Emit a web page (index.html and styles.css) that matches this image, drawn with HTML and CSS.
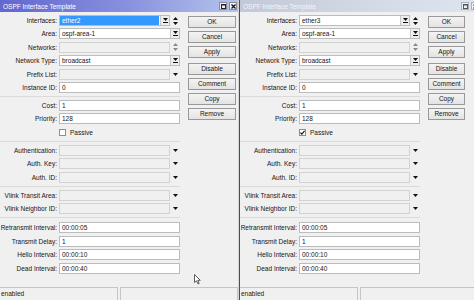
FILE: index.html
```html
<!DOCTYPE html>
<html lang="en">
<head>
    <meta charset="UTF-8">
    <title>OSPF Interface Template</title>
    <link rel="stylesheet" href="styles.css">
</head>
<body>
<div class="desk">

    <!-- left window (active) -->
    <div class="win active">
        <div class="titlebar">
            <span>OSPF Interface Template</span>
            <div class="tbtns">
                <span class="tbtn"><svg width="5" height="5" viewBox="0 0 5 5"><rect x="0.5" y="0.5" width="4" height="4" fill="none" stroke="#222"/><line x1="0" y1="1" x2="5" y2="1" stroke="#222"/></svg></span>
                <span class="tbtn"><svg width="5" height="5" viewBox="0 0 5 5"><path d="M0.5 0.5 L4.5 4.5 M4.5 0.5 L0.5 4.5" stroke="#111" stroke-width="1.3"/></svg></span>
            </div>
        </div>
        <div class="body">
            <div class="form">
                <div class="section">
                    <div class="row"><span class="lbl">Interfaces:</span><div class="ctl"><div class="field sel"><span class="val">ether2</span><span class="dd"><svg width="5" height="5" viewBox="0 0 5 5"><path d="M0 0 H5 L2.5 3 Z" fill="#111"/><rect x="0" y="4" width="5" height="1" fill="#111"/></svg></span></div><span class="icon"><svg width="5" height="8" viewBox="0 0 5 8"><path d="M2.5 0 L5 3 H0 Z M0 5 H5 L2.5 8 Z" fill="#111"/></svg></span></div></div>
                    <div class="row"><span class="lbl">Area:</span><div class="ctl"><div class="field"><span class="val">ospf-area-1</span><span class="dd"><svg width="5" height="5" viewBox="0 0 5 5"><path d="M0 0 H5 L2.5 3 Z" fill="#111"/><rect x="0" y="4" width="5" height="1" fill="#111"/></svg></span></div></div></div>
                    <div class="row"><span class="lbl">Networks:</span><div class="ctl"><div class="field off"></div><span class="icon"><svg width="5" height="8" viewBox="0 0 5 8"><path d="M2.5 0 L5 3 H0 Z M0 5 H5 L2.5 8 Z" fill="#8a8a8a"/></svg></span></div></div>
                    <div class="row"><span class="lbl">Network Type:</span><div class="ctl"><div class="field"><span class="val">broadcast</span><span class="dd"><svg width="5" height="5" viewBox="0 0 5 5"><path d="M0 0 H5 L2.5 3 Z" fill="#111"/><rect x="0" y="4" width="5" height="1" fill="#111"/></svg></span></div></div></div>
                    <div class="row"><span class="lbl">Prefix List:</span><div class="ctl"><div class="field off"></div><span class="icon"><svg width="5" height="3" viewBox="0 0 5 3"><path d="M0 0 H5 L2.5 3 Z" fill="#111"/></svg></span></div></div>
                    <div class="row"><span class="lbl">Instance ID:</span><div class="ctl"><div class="field"><span class="val">0</span></div></div></div>
                </div>
                <div class="sep"></div>
                <div class="section">
                    <div class="row"><span class="lbl">Cost:</span><div class="ctl"><div class="field"><span class="val">1</span></div></div></div>
                    <div class="row"><span class="lbl">Priority:</span><div class="ctl"><div class="field"><span class="val">128</span></div></div></div>
                    <div class="row"><span class="lbl"></span><div class="ctl"><span class="check"></span><span class="chklbl">Passive</span></div></div>
                </div>
                <div class="sep"></div>
                <div class="section">
                    <div class="row"><span class="lbl">Authentication:</span><div class="ctl"><div class="field off"></div><span class="icon"><svg width="5" height="3" viewBox="0 0 5 3"><path d="M0 0 H5 L2.5 3 Z" fill="#111"/></svg></span></div></div>
                    <div class="row"><span class="lbl">Auth. Key:</span><div class="ctl"><div class="field off"></div><span class="icon"><svg width="5" height="3" viewBox="0 0 5 3"><path d="M0 0 H5 L2.5 3 Z" fill="#111"/></svg></span></div></div>
                    <div class="row"><span class="lbl">Auth. ID:</span><div class="ctl"><div class="field off"></div><span class="icon"><svg width="5" height="3" viewBox="0 0 5 3"><path d="M0 0 H5 L2.5 3 Z" fill="#111"/></svg></span></div></div>
                </div>
                <div class="sep"></div>
                <div class="section">
                    <div class="row"><span class="lbl">Vlink Transit Area:</span><div class="ctl"><div class="field off"></div><span class="icon"><svg width="5" height="3" viewBox="0 0 5 3"><path d="M0 0 H5 L2.5 3 Z" fill="#111"/></svg></span></div></div>
                    <div class="row"><span class="lbl">Vlink Neighbor ID:</span><div class="ctl"><div class="field off"></div><span class="icon"><svg width="5" height="3" viewBox="0 0 5 3"><path d="M0 0 H5 L2.5 3 Z" fill="#111"/></svg></span></div></div>
                </div>
                <div class="sep wide"></div>
                <div class="section">
                    <div class="row"><span class="lbl">Retransmit Interval:</span><div class="ctl"><div class="field"><span class="val">00:00:05</span></div></div></div>
                    <div class="row"><span class="lbl">Transmit Delay:</span><div class="ctl"><div class="field"><span class="val">1</span></div></div></div>
                    <div class="row"><span class="lbl">Hello Interval:</span><div class="ctl"><div class="field"><span class="val">00:00:10</span></div></div></div>
                    <div class="row"><span class="lbl">Dead Interval:</span><div class="ctl"><div class="field"><span class="val">00:00:40</span></div></div></div>
                </div>
            </div>
            <div class="buttons">
                <div class="btn">OK</div>
                <div class="btn">Cancel</div>
                <div class="btn">Apply</div>
                <div class="btn split">Disable</div>
                <div class="btn">Comment</div>
                <div class="btn">Copy</div>
                <div class="btn">Remove</div>
            </div>
        </div>
        <div class="status">
            <div class="cell first">enabled</div>
            <div class="cell"></div>
        </div>
    </div>

    <!-- right window (inactive) -->
    <div class="win inactive">
        <div class="titlebar">
            <span>OSPF Interface Template</span>
            <div class="tbtns">
                <span class="tbtn"><svg width="5" height="5" viewBox="0 0 5 5"><rect x="0.5" y="0.5" width="4" height="4" fill="none" stroke="#555"/><line x1="0" y1="1" x2="5" y2="1" stroke="#555"/></svg></span>
                <span class="tbtn"><svg width="5" height="5" viewBox="0 0 5 5"><path d="M0.5 0.5 L4.5 4.5 M4.5 0.5 L0.5 4.5" stroke="#444" stroke-width="1.3"/></svg></span>
            </div>
        </div>
        <div class="body">
            <div class="form">
                <div class="section">
                    <div class="row"><span class="lbl">Interfaces:</span><div class="ctl"><div class="field"><span class="val">ether3</span><span class="dd"><svg width="5" height="5" viewBox="0 0 5 5"><path d="M0 0 H5 L2.5 3 Z" fill="#111"/><rect x="0" y="4" width="5" height="1" fill="#111"/></svg></span></div><span class="icon"><svg width="5" height="8" viewBox="0 0 5 8"><path d="M2.5 0 L5 3 H0 Z M0 5 H5 L2.5 8 Z" fill="#111"/></svg></span></div></div>
                    <div class="row"><span class="lbl">Area:</span><div class="ctl"><div class="field"><span class="val">ospf-area-1</span><span class="dd"><svg width="5" height="5" viewBox="0 0 5 5"><path d="M0 0 H5 L2.5 3 Z" fill="#111"/><rect x="0" y="4" width="5" height="1" fill="#111"/></svg></span></div></div></div>
                    <div class="row"><span class="lbl">Networks:</span><div class="ctl"><div class="field off"></div><span class="icon"><svg width="5" height="8" viewBox="0 0 5 8"><path d="M2.5 0 L5 3 H0 Z M0 5 H5 L2.5 8 Z" fill="#8a8a8a"/></svg></span></div></div>
                    <div class="row"><span class="lbl">Network Type:</span><div class="ctl"><div class="field"><span class="val">broadcast</span><span class="dd"><svg width="5" height="5" viewBox="0 0 5 5"><path d="M0 0 H5 L2.5 3 Z" fill="#111"/><rect x="0" y="4" width="5" height="1" fill="#111"/></svg></span></div></div></div>
                    <div class="row"><span class="lbl">Prefix List:</span><div class="ctl"><div class="field off"></div><span class="icon"><svg width="5" height="3" viewBox="0 0 5 3"><path d="M0 0 H5 L2.5 3 Z" fill="#111"/></svg></span></div></div>
                    <div class="row"><span class="lbl">Instance ID:</span><div class="ctl"><div class="field"><span class="val">0</span></div></div></div>
                </div>
                <div class="sep"></div>
                <div class="section">
                    <div class="row"><span class="lbl">Cost:</span><div class="ctl"><div class="field"><span class="val">1</span></div></div></div>
                    <div class="row"><span class="lbl">Priority:</span><div class="ctl"><div class="field"><span class="val">128</span></div></div></div>
                    <div class="row"><span class="lbl"></span><div class="ctl"><span class="check"><svg width="5" height="5" viewBox="0 0 5 5"><path d="M0.4 2.6 L1.9 4.1 L4.6 0.8" fill="none" stroke="#111" stroke-width="1.2"/></svg></span><span class="chklbl">Passive</span></div></div>
                </div>
                <div class="sep"></div>
                <div class="section">
                    <div class="row"><span class="lbl">Authentication:</span><div class="ctl"><div class="field off"></div><span class="icon"><svg width="5" height="3" viewBox="0 0 5 3"><path d="M0 0 H5 L2.5 3 Z" fill="#111"/></svg></span></div></div>
                    <div class="row"><span class="lbl">Auth. Key:</span><div class="ctl"><div class="field off"></div><span class="icon"><svg width="5" height="3" viewBox="0 0 5 3"><path d="M0 0 H5 L2.5 3 Z" fill="#111"/></svg></span></div></div>
                    <div class="row"><span class="lbl">Auth. ID:</span><div class="ctl"><div class="field off"></div><span class="icon"><svg width="5" height="3" viewBox="0 0 5 3"><path d="M0 0 H5 L2.5 3 Z" fill="#111"/></svg></span></div></div>
                </div>
                <div class="sep"></div>
                <div class="section">
                    <div class="row"><span class="lbl">Vlink Transit Area:</span><div class="ctl"><div class="field off"></div><span class="icon"><svg width="5" height="3" viewBox="0 0 5 3"><path d="M0 0 H5 L2.5 3 Z" fill="#111"/></svg></span></div></div>
                    <div class="row"><span class="lbl">Vlink Neighbor ID:</span><div class="ctl"><div class="field off"></div><span class="icon"><svg width="5" height="3" viewBox="0 0 5 3"><path d="M0 0 H5 L2.5 3 Z" fill="#111"/></svg></span></div></div>
                </div>
                <div class="sep wide"></div>
                <div class="section">
                    <div class="row"><span class="lbl">Retransmit Interval:</span><div class="ctl"><div class="field"><span class="val">00:00:05</span></div></div></div>
                    <div class="row"><span class="lbl">Transmit Delay:</span><div class="ctl"><div class="field"><span class="val">1</span></div></div></div>
                    <div class="row"><span class="lbl">Hello Interval:</span><div class="ctl"><div class="field"><span class="val">00:00:10</span></div></div></div>
                    <div class="row"><span class="lbl">Dead Interval:</span><div class="ctl"><div class="field"><span class="val">00:00:40</span></div></div></div>
                </div>
            </div>
            <div class="buttons">
                <div class="btn">OK</div>
                <div class="btn">Cancel</div>
                <div class="btn">Apply</div>
                <div class="btn split">Disable</div>
                <div class="btn">Comment</div>
                <div class="btn">Copy</div>
                <div class="btn">Remove</div>
            </div>
        </div>
        <div class="status">
            <div class="cell first">enabled</div>
            <div class="cell"></div>
        </div>
    </div>

    <!-- mouse pointer -->
    <svg class="cursor" width="7" height="11" viewBox="0 0 7 11">
        <path d="M0.5 0.5 L0.5 8.5 L2.5 6.8 L4 10 L5.2 9.4 L3.8 6.3 L6.3 6.3 Z" fill="#fff" stroke="#333" stroke-width="0.8"/>
    </svg>
</div>
</body>
</html>
```

FILE: styles.css
```css
* {
    box-sizing: border-box;
}

body {
    margin: 0;
    font-family: 'Liberation Sans', Arial, sans-serif;
    font-size: 6.5px;
    color: #151515;
    background-color: #f0f0f0;
    overflow: hidden;
}

.desk {
    position: relative;
    display: flex;
    width: 474px;
    height: 300px;
    overflow: hidden;
}

.win {
    flex: 0 0 239px;
    height: 300px;
    display: flex;
    flex-direction: column;
    background-color: #f0f0f0;
    border-right: 1px solid #d6d6d6;
}

.win.inactive {
    flex: 0 0 241px;
    border-right: none;
    border-left: 1px solid #4e4e4e;
}

/* title bars */
.titlebar {
    height: 12px;
    display: flex;
    align-items: center;
    justify-content: space-between;
    padding: 0 1px 0 3px;
    color: #fff;
}

.active .titlebar {
    background: linear-gradient(to right, #6266cf, #8a92de 55%, #b4c4ec);
}

.inactive .titlebar {
    background: linear-gradient(to right, #c3c8d8, #d3d9e6 55%, #dfe5ef);
    color: #f3f5f9;
}

.tbtns {
    display: flex;
    gap: 2px;
}

.tbtn {
    width: 8px;
    height: 8px;
    display: flex;
    align-items: center;
    justify-content: center;
    background-color: #f4f4f4;
    border: 1px solid #8c8c9c;
}

.inactive .tbtn {
    background-color: #eef0f4;
    border-color: #aab0c0;
}

/* form area */
.body {
    flex: 1;
    display: flex;
    padding-top: 3px;
}

.form {
    width: 180px;
}

.section {
    display: flex;
    flex-direction: column;
    gap: 2.4px;
}

.sep {
    border-top: 1px solid #dadada;
    margin: 3px 0;
}

.sep.wide {
    margin: 3.5px 0 4px;
}

.row {
    display: flex;
    align-items: center;
    height: 11px;
}

.lbl {
    width: 58px;
    padding-right: 1px;
    text-align: right;
    white-space: nowrap;
}

.ctl {
    width: 121px;
    height: 100%;
    margin-left: 1px;
    display: flex;
    align-items: center;
}

.field {
    flex: 1;
    height: 100%;
    display: flex;
    background-color: #fff;
    border: 1px solid #bcbcbc;
}

.field.off {
    background-color: #f0f0f0;
    border-color: #d2d2d2;
}

.val {
    flex: 1;
    padding-left: 2px;
    line-height: 9px;
    white-space: nowrap;
}

.field.sel .val {
    background-color: #3399ff;
    color: #fff;
    margin: 0 1px 0 0;
}

.dd {
    width: 9px;
    display: flex;
    align-items: center;
    justify-content: center;
    background-color: #ededed;
    border-left: 1px solid #c6c6c6;
}

.icon {
    width: 10px;
    display: flex;
    align-items: center;
    justify-content: center;
}

.check {
    width: 7px;
    height: 7px;
    display: flex;
    align-items: center;
    justify-content: center;
    background-color: #fff;
    border: 1px solid #8e8e8e;
}

.chklbl {
    margin-left: 4px;
}

/* button column */
.buttons {
    width: 48px;
    margin-left: 8px;
    padding-top: 1px;
    display: flex;
    flex-direction: column;
    gap: 3px;
}

.inactive .buttons {
    width: 37px;
}

.btn {
    height: 12px;
    line-height: 10px;
    text-align: center;
    border: 1px solid #999;
    background: linear-gradient(#f4f4f4, #e3e3e3);
}

.btn.split {
    margin-top: 2px;
}

/* status bar */
.status {
    height: 13px;
    display: flex;
    gap: 2px;
}

.cell {
    flex: 1;
    padding-left: 1px;
    line-height: 11px;
    border: 1px solid #c6c6c6;
    border-bottom: none;
}

.cell.first {
    flex: 0 0 118px;
    border-left: none;
}

.cursor {
    position: absolute;
    left: 194px;
    top: 274px;
}
```
